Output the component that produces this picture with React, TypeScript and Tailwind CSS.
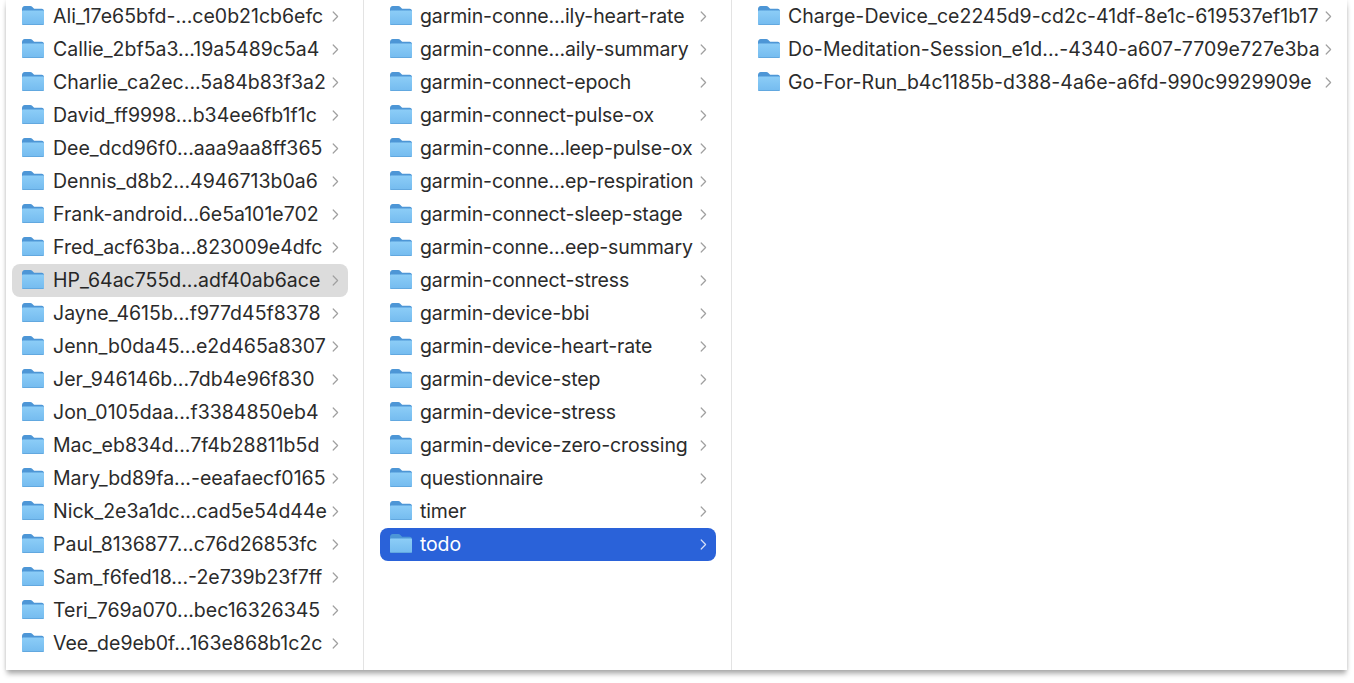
const usersColumn = [
  'Ali_17e65bfd-...ce0b21cb6efc',
  'Callie_2bf5a3...19a5489c5a4',
  'Charlie_ca2ec...5a84b83f3a2',
  'David_ff9998...b34ee6fb1f1c',
  'Dee_dcd96f0...aaa9aa8ff365',
  'Dennis_d8b2...4946713b0a6',
  'Frank-android...6e5a101e702',
  'Fred_acf63ba...823009e4dfc',
  'HP_64ac755d...adf40ab6ace',
  'Jayne_4615b...f977d45f8378',
  'Jenn_b0da45...e2d465a8307',
  'Jer_946146b...7db4e96f830',
  'Jon_0105daa...f3384850eb4',
  'Mac_eb834d...7f4b28811b5d',
  'Mary_bd89fa...-eeafaecf0165',
  'Nick_2e3a1dc...cad5e54d44e',
  'Paul_8136877...c76d26853fc',
  'Sam_f6fed18...-2e739b23f7ff',
  'Teri_769a070...bec16326345',
  'Vee_de9eb0f...163e868b1c2c',
];

const sourcesColumn = [
  'garmin-conne...ily-heart-rate',
  'garmin-conne...aily-summary',
  'garmin-connect-epoch',
  'garmin-connect-pulse-ox',
  'garmin-conne...leep-pulse-ox',
  'garmin-conne...ep-respiration',
  'garmin-connect-sleep-stage',
  'garmin-conne...eep-summary',
  'garmin-connect-stress',
  'garmin-device-bbi',
  'garmin-device-heart-rate',
  'garmin-device-step',
  'garmin-device-stress',
  'garmin-device-zero-crossing',
  'questionnaire',
  'timer',
  'todo',
];

const todoColumn = [
  'Charge-Device_ce2245d9-cd2c-41df-8e1c-619537ef1b17',
  'Do-Meditation-Session_e1d...-4340-a607-7709e727e3ba',
  'Go-For-Run_b4c1185b-d388-4a6e-a6fd-990c9929909e',
];

function FolderIcon({ id }: { id: string }) {
  return (
    <svg width="24" height="21" viewBox="0 1 24 21" className="shrink-0">
      <defs>
        <linearGradient id={id} x1="0" y1="0" x2="0" y2="1">
          <stop offset="0" stopColor="#8ccdf7" />
          <stop offset="1" stopColor="#74bbef" />
        </linearGradient>
      </defs>
      <path
        d="M1 4.2C1 2.4 2 1 3.8 1h5.4c1 0 1.6.4 2.2 1l1.2 1.2c.4.4.8.6 1.4.6h6.6c1.7 0 2.4 1 2.4 2.6v2H1z"
        fill="#4d96d6"
      />
      <path
        d="M1 6.6c0-.7.5-1.2 1.2-1.2h19.6c.7 0 1.2.5 1.2 1.2v11.8c0 1-.7 1.6-1.6 1.6H2.6C1.7 20 1 19.4 1 18.4z"
        fill={`url(#${id})`}
      />
      <path d="M1 19c.2.7.8 1 1.6 1h18.8c.8 0 1.4-.3 1.6-1z" fill="#5a9fd8" opacity="0.7" />
    </svg>
  );
}

function Chevron({ color }: { color: string }) {
  return (
    <svg width="7" height="11" viewBox="0 0 7 11" fill="none" className="shrink-0">
      <path d="M1.2 1l4.4 4.5-4.4 4.5" stroke={color} strokeWidth="1.2" strokeLinecap="round" strokeLinejoin="round" />
    </svg>
  );
}

type RowProps = {
  name: string;
  id: string;
  state?: 'muted' | 'active';
  textClass: string;
};

function Row({ name, id, state, textClass }: RowProps) {
  const bg = state === 'active' ? 'bg-[#2a62d9] text-white' : state === 'muted' ? 'bg-[#dcdcdc] text-[#262626]' : 'text-[#2b2b2b]';
  return (
    <div className={`flex h-[33px] items-center rounded-lg pl-[9px] pr-[9px] ${bg}`}>
      <FolderIcon id={id} />
      <span className={`flex-1 whitespace-nowrap ${textClass}`}>{name}</span>
      <Chevron color={state === 'active' ? '#d5e0f7' : '#a0a0a0'} />
    </div>
  );
}

export default function App() {
  return (
    <div className="h-[683px] w-[1354px] overflow-hidden bg-white pl-[6px] pr-[7px] font-['Inter','Liberation_Sans',sans-serif] text-[19.5px]">
      <div className="flex h-[670px] bg-white shadow-[0_5px_5px_-1px_rgba(0,0,0,0.3),0_0_4px_rgba(0,0,0,0.12)]">
        <div className="w-[358px] shrink-0 border-r border-[#e3e3e3] pl-[6px] pr-[15px]">
          {usersColumn.map((name, i) => (
            <Row key={name} id={`u${i}`} name={name} textClass="ml-[8px]" state={name.startsWith('HP_') ? 'muted' : undefined} />
          ))}
        </div>
        <div className="w-[368px] shrink-0 border-r border-[#e3e3e3] pl-[16px] pr-[15px]">
          {sourcesColumn.map((name, i) => (
            <Row key={name} id={`s${i}`} name={name} textClass="ml-[7px] tracking-[-0.13px]" state={name === 'todo' ? 'active' : undefined} />
          ))}
        </div>
        <div className="flex-1 pl-[16px] pr-[6px]">
          {todoColumn.map((name, i) => (
            <Row key={name} id={`t${i}`} name={name} textClass="ml-[7px] tracking-[0.05px]" />
          ))}
        </div>
      </div>
    </div>
  );
}
